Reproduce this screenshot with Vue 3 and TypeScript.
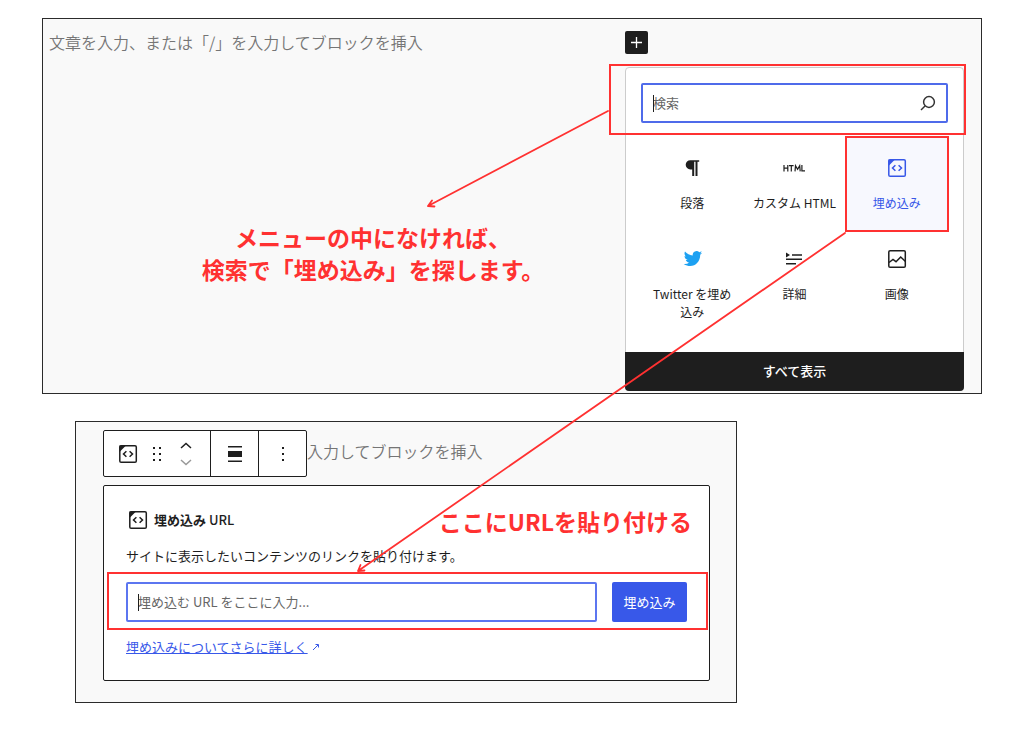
<script setup lang="ts">
import { ref } from 'vue'

interface BlockItem {
  id: string
  label: string
}

const blocks: BlockItem[] = [
  { id: 'paragraph', label: '段落' },
  { id: 'html', label: 'カスタム HTML' },
  { id: 'embed', label: '埋め込み' },
  { id: 'twitter', label: 'Twitter を埋め込み' },
  { id: 'details', label: '詳細' },
  { id: 'image', label: '画像' },
]

const query = ref('')
const url = ref('')
</script>

<template>
  <main class="page">
    <section class="panel inserter">
      <div class="canvas">
        <p class="prompt">文章を入力、または「/」を入力してブロックを挿入</p>
        <p class="note">メニューの中になければ、<br />検索で「埋め込み」を探します。</p>
      </div>

      <div class="side">
        <button class="add" type="button" aria-label="ブロックを追加">
          <svg viewBox="0 0 23 23" width="23" height="23"><path d="M11.5 6v11M6 11.5h11" stroke="#fff" stroke-width="1.3" /></svg>
        </button>

        <div class="popover">
          <div class="search">
            <input v-model="query" type="text" placeholder="検索" aria-label="検索" />
            <i class="caret"></i>
            <svg viewBox="0 0 24 24" width="24" height="24" fill="none" stroke="#333" stroke-width="1.5">
              <circle cx="13" cy="11" r="5.4" /><path d="M9 15l-4 4" />
            </svg>
          </div>
          <span class="frame frame-search"></span>

          <div class="grid">
            <button v-for="b in blocks" :key="b.id" type="button" class="cell" :class="{ active: b.id === 'embed' }">
              <svg v-if="b.id === 'paragraph'" viewBox="0 0 24 24" width="24" height="24">
                <path d="M10.300 4.200h8.900v1.500h-1.700V20h-2V5.700h-1.300V20h-2v-6.600h-1.900a4.600 4.600 0 0 1 0-9.200z" fill="#1e1e1e" />
              </svg>
              <svg v-else-if="b.id === 'html'" viewBox="0 0 24 24" width="24" height="24" fill="none" stroke="#1e1e1e" stroke-width="1.200">
                <path d="M2 9v6.400M5.800 9v6.400M2 12.200h3.800M7 9.600h4.600M9.300 9.600v5.800M13 15.400l.5-5.800 2.100 3.600 2.100-3.600.5 5.800M19.900 9v5.800h3.100" />
              </svg>
              <svg v-else-if="b.id === 'embed'" viewBox="0 0 24 24" width="24" height="24" fill="none" stroke="#3858e9" stroke-width="1.5">
                <rect x="3.800" y="3.800" width="16.500" height="16.500" rx="1.300" />
                <path d="M3.500 3.500H10L3.500 10z" fill="#3858e9" stroke="none" />
                <path d="M10.400 9.200L7.500 12l2.900 2.800M13.600 9.200l2.900 2.800-2.900 2.800" />
              </svg>
              <svg v-else-if="b.id === 'twitter'" viewBox="0 0 24 24" width="24" height="24">
                <path d="M22.200 5.700c-.8.3-1.500.5-2.100.6.7-.4 1.300-1.100 1.600-2-.7.4-1.500.7-2.400.9a3.800 3.800 0 0 0-6.500 3.400c-3.100-.2-5.900-1.700-7.800-4-1 1.700-.5 3.900 1.200 5-.6 0-1.200-.2-1.700-.5 0 1.800 1.300 3.400 3 3.700-.5.2-1.100.2-1.700.1.500 1.500 1.900 2.600 3.500 2.600A7.600 7.600 0 0 1 3.700 17c8.500 5.300 16.700-.6 16.500-9.300.8-.6 1.500-1.200 2-2z" fill="#1da1f2" />
              </svg>
              <svg v-else-if="b.id === 'details'" viewBox="0 0 24 24" width="24" height="24">
                <path d="M4 5.500l4 2.500-4 2.500zM10 7.300h10v1.500H10zM4 11.500h16v1.500H4zM4 16h10v1.500H4z" fill="#1e1e1e" />
              </svg>
              <svg v-else viewBox="0 0 24 24" width="24" height="24" fill="none" stroke="#1e1e1e" stroke-width="1.500">
                <rect x="3.800" y="3.800" width="16.500" height="16.500" rx="1.300" />
                <path d="M4 15.500l4-3 3 2.200 4.700-4.700 4.800 4.500" />
              </svg>
              <span>{{ b.label }}</span>
              <i v-if="b.id === 'embed'" class="frame frame-cell"></i>
            </button>
          </div>

          <button class="all" type="button">すべて表示</button>
        </div>
      </div>
    </section>

    <section class="panel editor">
      <div class="bar-row">
        <div class="toolbar" role="toolbar" aria-label="ブロックツール">
          <div class="group first">
            <button type="button" aria-label="埋め込み">
              <svg viewBox="0 0 24 24" width="24" height="24" fill="none" stroke="#1e1e1e" stroke-width="1.500">
                <rect x="3.800" y="3.800" width="16.500" height="16.500" rx="1.300" />
                <path d="M3.500 3.500H10L3.500 10z" fill="#1e1e1e" stroke="none" />
                <path d="M10.400 9.200L7.500 12l2.900 2.800M13.600 9.200l2.900 2.800-2.900 2.800" />
              </svg>
            </button>
            <button type="button" aria-label="ドラッグ">
              <svg viewBox="0 0 24 24" width="24" height="24" fill="#1e1e1e">
                <path d="M8 5h2v2H8zM14 5h2v2h-2zM8 11h2v2H8zM14 11h2v2h-2zM8 17h2v2H8zM14 17h2v2h-2z" />
              </svg>
            </button>
            <button type="button" aria-label="移動">
              <svg viewBox="0 0 24 32" width="24" height="32" fill="none" stroke-width="1.500">
                <path d="M7 10l5-4.500 5 4.500" stroke="#1e1e1e" /><path d="M7 22l5 4.500 5-4.500" stroke="#999" />
              </svg>
            </button>
          </div>
          <div class="group">
            <button type="button" aria-label="配置">
              <svg viewBox="0 0 24 24" width="24" height="24" fill="#1e1e1e">
                <path d="M5 4h14v1.500H5zM5 9h14v6H5zM5 18.500h14V20H5z" />
              </svg>
            </button>
          </div>
          <div class="group">
            <button type="button" aria-label="オプション">
              <svg viewBox="0 0 24 24" width="24" height="24" fill="#1e1e1e">
                <path d="M11 5h2v2h-2zM11 11h2v2h-2zM11 17h2v2h-2z" />
              </svg>
            </button>
          </div>
        </div>
        <p class="prompt">入力してブロックを挿入</p>
      </div>

      <form class="embed" @submit.prevent>
        <label class="title" for="embed-url">
          <svg viewBox="0 0 24 24" width="24" height="24" fill="none" stroke="#1e1e1e" stroke-width="1.500">
            <rect x="3.800" y="3.800" width="16.500" height="16.500" rx="1.300" />
            <path d="M3.500 3.500H10L3.500 10z" fill="#1e1e1e" stroke="none" />
            <path d="M10.400 9.200L7.500 12l2.900 2.800M13.600 9.200l2.900 2.800-2.900 2.800" />
          </svg>
          <span><b>埋め込み</b> URL</span>
        </label>
        <p class="note note-url">ここにURLを貼り付ける</p>
        <p class="desc">サイトに表示したいコンテンツのリンクを貼り付けます。</p>
        <div class="row">
          <div class="field">
            <input id="embed-url" v-model="url" type="text" placeholder="埋め込む URL をここに入力..." />
            <i class="caret"></i>
          </div>
          <button class="submit" type="submit">埋め込み</button>
          <span class="frame frame-form"></span>
        </div>
        <a class="more" href="#"><span>埋め込みについてさらに詳しく</span>
          <svg viewBox="0 0 8 10" width="8" height="10" fill="none" stroke="#3858e9"><path d="M1 8l5-5M3.500 2.500H6.500V5.500" /></svg>
        </a>
      </form>
    </section>

    <svg class="arrows" viewBox="0 0 1024 745" fill="none" stroke="#ff3131" stroke-width="1.800" stroke-linecap="round" stroke-linejoin="round" aria-hidden="true">
      <path d="M608 111L428 206M432 200.500L428 206L434.500 206.500" />
      <path d="M845 233L358 571M360.500 565L358 571L364.500 570.500" />
    </svg>
  </main>
</template>

<style>
body {
  margin: 0;
  background: #fff;
}
</style>

<style scoped>
.page {
  position: relative;
  box-sizing: border-box;
  padding: 18px 42px 42px;
  font-family: "Noto Sans CJK JP", sans-serif;
  font-size: 13px;
  line-height: 18px;
  color: #1e1e1e;
}
.page * {
  box-sizing: border-box;
}
p {
  margin: 0;
}
button,
input {
  font: inherit;
  color: inherit;
  margin: 0;
}
button {
  padding: 0;
  border: 0;
  background: none;
}
svg {
  display: block;
  flex: none;
}
.panel {
  border: 1px solid #2b2b2b;
  background: #f9f9f9;
}
.inserter {
  display: flex;
  padding: 12px 17px 2px 6px;
}
.canvas {
  flex: 1;
}
.prompt {
  font-size: 16px;
  font-weight: 350;
  line-height: 24px;
  color: #757575;
}
.canvas .prompt {
  margin-top: -1px;
}
.note {
  font-size: 23px;
  font-weight: 700;
  line-height: 32px;
  color: #ff3131;
}
.canvas .note {
  margin-top: 167px;
  padding-left: 72px;
  text-align: center;
}
.side {
  width: 339px;
}
.add {
  display: block;
  margin-bottom: 13px;
  border-radius: 2px;
  background: #1e1e1e;
}
.popover {
  position: relative;
  border: 1px solid #ccc;
  border-radius: 4px;
  background: #fff;
}
.search {
  position: relative;
  display: flex;
  margin: 15px 15px 13px;
}
.search input,
.field input {
  width: 100%;
  height: 40px;
  padding: 0 10px 2px;
  border: 2px solid #4f6bea;
  border-radius: 2px;
  background: #fff;
  font-size: 13px;
  outline: none;
}
input::placeholder {
  color: #666;
  opacity: 1;
}
.caret {
  position: absolute;
  left: 12px;
  top: 12px;
  width: 1px;
  height: 17px;
  background: #1e1e1e;
}
.search svg {
  position: absolute;
  right: 8px;
  top: 8px;
}
.frame {
  position: absolute;
  border: 2px solid #ff3131;
  pointer-events: none;
}
.frame-search {
  left: -17px;
  right: -3px;
  top: -4px;
  height: 71px;
}
.grid {
  display: grid;
  grid-template-columns: repeat(3, 1fr);
  grid-template-rows: 91px 125px;
  margin: 0 15px;
}
.cell {
  position: relative;
  display: flex;
  flex-direction: column;
  align-items: center;
  gap: 14px;
  padding: 20px 8px 0;
  font-size: 12px;
  line-height: 18px;
}
.cell.active {
  color: #3858e9;
}
.frame-cell {
  inset: 0 -1px -5px -1px;
  background: rgba(56, 88, 233, 0.04);
}
.all {
  display: block;
  width: calc(100% + 2px);
  height: 39px;
  margin: 0 -1px -1px;
  padding-bottom: 2px;
  border-radius: 0 0 4px 4px;
  background: #1e1e1e;
  color: #fff;
  font-weight: 500;
}
.editor {
  max-width: 662px;
  margin: 27px 33px 0;
  padding: 8px 26px 21px 27px;
}
.bar-row {
  display: flex;
}
.bar-row .prompt {
  padding-top: 9px;
}
.toolbar {
  display: flex;
  height: 47px;
  border: 1px solid #1e1e1e;
  border-radius: 2px;
  background: #fff;
}
.group {
  display: flex;
  align-items: center;
  justify-content: center;
  width: 48px;
}
.group + .group {
  border-left: 1px solid #1e1e1e;
}
.group.first {
  width: 106px;
  gap: 5px;
}
.embed {
  position: relative;
  margin-top: 8px;
  padding: 22px 22px 24px;
  border: 1px solid #1e1e1e;
  border-radius: 2px;
  background: #fff;
}
.title {
  display: flex;
  align-items: center;
  gap: 4px;
  font-weight: 500;
}
.title b {
  font-weight: 700;
}
.note-url {
  position: absolute;
  right: 17px;
  top: 19px;
}
.desc {
  margin-top: 15px;
}
.row {
  position: relative;
  display: flex;
  gap: 15px;
  margin-top: 17px;
}
.field {
  position: relative;
  flex: 1;
}
.field input {
  display: block;
  border-color: #5c76f0;
}
.submit {
  width: 75px;
  height: 40px;
  border-radius: 2px;
  background: #3858e9;
  color: #fff;
}
.frame-form {
  inset: -10px -21px -8px -19px;
}
.more {
  display: flex;
  align-items: center;
  gap: 4px;
  margin-top: 16px;
  color: #3858e9;
  text-decoration: none;
}
.more span {
  text-decoration: underline;
}
.arrows {
  position: absolute;
  left: 0;
  top: 0;
  width: 100%;
  pointer-events: none;
}
</style>
